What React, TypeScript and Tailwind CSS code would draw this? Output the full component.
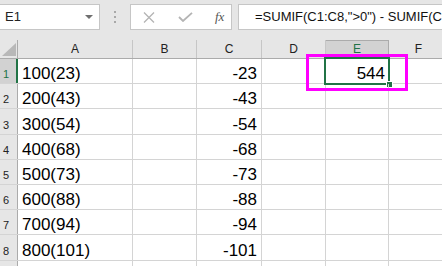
import React from "react";

const cols = [
    {name: "A", w: "w-[115px]"},
    {name: "B", w: "w-[64px]"},
    {name: "C", w: "w-[65px]"},
    {name: "D", w: "w-[64px]"},
    {name: "E", w: "w-[63px]"},
    {name: "F", w: "w-[60px]"},
];

const rows = [
    {n: 1, a: "100(23)", c: "-23", h: "h-[25px]"},
    {n: 2, a: "200(43)", c: "-43", h: "h-[25px]"},
    {n: 3, a: "300(54)", c: "-54", h: "h-[26px]"},
    {n: 4, a: "400(68)", c: "-68", h: "h-[25px]"},
    {n: 5, a: "500(73)", c: "-73", h: "h-[25px]"},
    {n: 6, a: "600(88)", c: "-88", h: "h-[25px]"},
    {n: 7, a: "700(94)", c: "-94", h: "h-[25px]"},
    {n: 8, a: "800(101)", c: "-101", h: "h-[26px]"},
];

const Toolbar = () => (
    <div className="flex h-[40px] items-start pt-[4px]">
        <div className="flex h-[26px] w-[100px] shrink-0 items-center justify-between border border-l-0 border-[#c6c6c6] bg-white pl-[5px] pr-[6px] text-[13px] text-[#222]">
            <span>E1</span>
            <svg width="8" height="5" viewBox="0 0 8 5"><path d="M0 0h8L4 4z" fill="#6f6f6f"/></svg>
        </div>
        <div className="flex w-[30px] shrink-0 flex-col items-center gap-[3px] pt-[7px]">
            <span className="h-[2px] w-[2px] bg-[#a8a8a8]"/>
            <span className="h-[2px] w-[2px] bg-[#a8a8a8]"/>
            <span className="h-[2px] w-[2px] bg-[#a8a8a8]"/>
        </div>
        <div className="flex h-[26px] w-[102px] shrink-0 items-center border border-[#c6c6c6] bg-white pl-[12px]">
            <svg width="12" height="11" viewBox="0 0 12 11">
                <path d="M1 0.5L11 10.5M11 0.5L1 10.5" stroke="#b4b4b4" strokeWidth="1.3"/>
            </svg>
            <svg className="ml-[23px]" width="15" height="10" viewBox="0 0 15 10">
                <path d="M1 5L5 9L14 0.8" fill="none" stroke="#b4b4b4" strokeWidth="1.8"/>
            </svg>
            <span className="ml-[22px] font-['Liberation_Serif',serif] text-[13px] italic text-[#555]">fx</span>
        </div>
        <div className="w-[6px] shrink-0"/>
        <div className="flex h-[26px] min-w-0 flex-1 items-center overflow-hidden whitespace-nowrap border border-r-0 border-[#c6c6c6] bg-white pl-[16px] text-[13px] text-[#111]">
            =SUMIF(C1:C8,"&gt;0") - SUMIF(C1:C8,"&lt;0")
        </div>
    </div>
);

const HeaderRow = () => (
    <div className="flex h-[19px] border-b border-[#ababab] text-[12px] text-[#222]">
        <div className="flex w-[18px] shrink-0 items-end justify-end border-r border-[#ababab] pb-[2px] pr-[1px]">
            <svg width="14" height="13" viewBox="0 0 14 13"><path d="M14 0V13H0z" fill="#b8b8b8"/></svg>
        </div>
        {cols.map(col => (
            <div
                key={col.name}
                className={col.name === "E"
                    ? `${col.w} flex shrink-0 items-center justify-center border-r border-t border-[#ababab] border-b-2 border-b-[#217346] bg-[#d2d2d2] text-[#217346]`
                    : `${col.w} flex shrink-0 items-center justify-center border-r border-[#c6c6c6]`}
            >
                {col.name}
            </div>
        ))}
    </div>
);

const Row = ({n, a, c, h}: { n: number, a: string, c: string, h: string }) => (
    <div className={`flex ${h} border-b border-[#d4d4d4] text-[17px] leading-none text-black`}>
        <div className={n === 1
            ? "flex w-[18px] shrink-0 items-end border-r-2 border-[#217346] bg-[#d2d2d2] pb-[3px] pl-[3px] text-[11px] text-[#217346]"
            : "flex w-[18px] shrink-0 items-end border-r border-[#ababab] bg-[#e6e6e6] pb-[3px] pl-[3px] text-[11px] text-[#222]"}>
            {n}
        </div>
        <div className="flex w-[115px] shrink-0 items-end border-r border-[#d4d4d4] pb-[1px] pl-[4px]">{a}</div>
        <div className="w-[64px] shrink-0 border-r border-[#d4d4d4]"/>
        <div className="flex w-[65px] shrink-0 items-end justify-end border-r border-[#d4d4d4] pb-[1px] pr-[4px]">{c}</div>
        <div className="w-[64px] shrink-0 border-r border-[#d4d4d4]"/>
        <div className="relative flex w-[63px] shrink-0 items-end justify-end border-r border-[#d4d4d4] pb-[1px] pr-[3px]">
            {n === 1 && (
                <>
                    <span>544</span>
                    <div className="absolute left-[-2px] top-[-2px] h-[28px] w-[66px] border-2 border-[#217346]"/>
                    <div className="absolute left-[60px] top-[22px] h-[7px] w-[7px] border border-white bg-[#217346]"/>
                </>
            )}
        </div>
        <div className="w-[60px] shrink-0 border-r border-[#d4d4d4]"/>
    </div>
);

export default function App() {
    return (
        <div className="relative h-[266px] w-[442px] overflow-hidden bg-[#e6e6e6] font-['Liberation_Sans',Arial,sans-serif]">
            <Toolbar/>
            <HeaderRow/>
            <div className="bg-white">
                {rows.map(r => <Row key={r.n} {...r}/>)}
                <div className="flex h-[10px]">
                    <div className="w-[18px] shrink-0 border-r border-[#ababab] bg-[#e6e6e6]"/>
                    {cols.map(col => <div key={col.name} className={`${col.w} shrink-0 border-r border-[#d4d4d4]`}/>)}
                </div>
            </div>
            {/* highlight box round the result */}
            <div className="absolute left-[306px] top-[54px] h-[37px] w-[102px] border-[3px] border-[#ff00ff]"/>
        </div>
    );
}
